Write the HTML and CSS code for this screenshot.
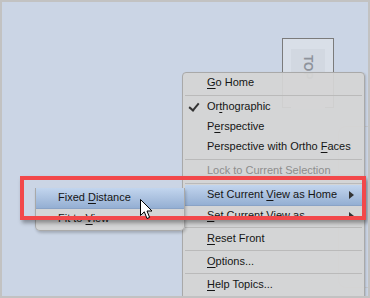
FILE: index.html
```html
<!DOCTYPE html>
<html lang="en">
<head>
    <meta charset="UTF-8">
    <title>View Menu</title>
    <link rel="stylesheet" href="styles.css">
</head>
<body>
    <div class="viewport">
        <div class="cube">
            <div class="cube-face"><span class="cube-label">TOP</span></div>
        </div>
        <div class="ring"></div>

        <div class="menu main-menu">
            <div class="item"><u>G</u>o Home</div>
            <div class="sep"></div>
            <div class="item checked">Or<u>t</u>hographic</div>
            <div class="item">P<u>e</u>rspective</div>
            <div class="item">Perspective with Ortho <u>F</u>aces</div>
            <div class="sep"></div>
            <div class="item disabled">Lock to Current Selection</div>
            <div class="sep"></div>
            <div class="item active has-sub">Set Current <u>V</u>iew as Home</div>
            <div class="item has-sub"><u>S</u>et Current View as</div>
            <div class="sep tight"></div>
            <div class="item"><u>R</u>eset Front</div>
            <div class="sep tight"></div>
            <div class="item"><u>O</u>ptions...</div>
            <div class="sep tight"></div>
            <div class="item"><u>H</u>elp Topics...</div>
        </div>

        <div class="menu sub-menu">
            <div class="item active">Fixed <u>D</u>istance</div>
            <div class="item">Fit to <u>V</u>iew</div>
        </div>

        <div class="callout"></div>

        <svg class="cursor" width="13" height="21" viewBox="0 0 13 21">
            <path d="M0.5 0.5 L0.5 16.5 L4.3 12.8 L7 19.5 L9.6 18.4 L7 12 L12 12 Z" fill="#fff" stroke="#000" stroke-width="1"/>
        </svg>
    </div>
</body>
</html>
```

FILE: styles.css
```css
body {
    margin: 0;
    font-family: "Liberation Sans", Arial, sans-serif;
    font-size: 11px;
    color: #151515;
}

.viewport {
    position: relative;
    width: 370px;
    height: 298px;
    box-sizing: border-box;
    border: 2px solid #c2c2c2;
    background-color: #cbd5e5;
    overflow: hidden;
}

/* view cube behind the menu */
.cube {
    position: absolute;
    left: 280px;
    top: 36px;
    width: 52px;
    height: 70px;
    border: 1px solid #7b7b7b;
    background-color: #d9dfe8;
    display: flex;
    justify-content: center;
    padding-top: 10px;
    box-sizing: border-box;
}
.cube-face {
    width: 34px;
    height: 60px;
    background-color: #d2d8e1;
    display: flex;
    justify-content: center;
}
.cube-label {
    writing-mode: vertical-rl;
    font-weight: bold;
    font-size: 12px;
    color: #8e939b;
    margin-top: 6px;
}
.ring {
    position: absolute;
    left: 336px;
    top: 124px;
    width: 40px;
    height: 160px;
    border: 1px solid #c3c7ce;
    border-radius: 8px;
}

.menu {
    position: absolute;
    box-sizing: border-box;
    background-color: rgba(212, 212, 212, 0.94);
    border: 1px solid #a9a9a9;
}

.main-menu {
    left: 180px;
    top: 70px;
    width: 183px;
    height: 232px;
    border-radius: 4px 4px 0 0;
    padding: 0 2px;
    box-shadow: 1px 1px 2px rgba(0, 0, 0, 0.15);
}

.sub-menu {
    left: 33px;
    top: 186px;
    width: 150px;
    height: 43px;
    border-top: none;
    border-radius: 0 0 5px 5px;
    box-shadow: 1px 2px 3px rgba(0, 0, 0, 0.2);
}

.item {
    position: relative;
    height: 20px;
    line-height: 19px;
    padding-left: 22px;
    white-space: nowrap;
}

.item u {
    text-decoration-thickness: 1px;
    text-underline-offset: 2px;
}

.sep {
    height: 1px;
    margin: 2px 0 1px 0;
    background-color: #bababa;
}
.sep.tight {
    margin: 1px 0 1px 0;
}

.disabled {
    color: #8d8d8d;
}

.active {
    background: linear-gradient(#c2d5ee, #a7bedd 60%, #94afd3);
    border-bottom: 1px solid #8aa3c6;
}

.checked::before {
    content: "";
    position: absolute;
    left: 6px;
    top: 4px;
    width: 4px;
    height: 8px;
    border-right: 2px solid #333;
    border-bottom: 2px solid #333;
    transform: rotate(40deg);
}

.has-sub::after {
    content: "";
    position: absolute;
    right: 8px;
    top: 6px;
    border-left: 5px solid #333;
    border-top: 4px solid transparent;
    border-bottom: 4px solid transparent;
}

.callout {
    position: absolute;
    left: 18px;
    top: 174px;
    width: 346px;
    height: 44px;
    box-sizing: border-box;
    border: 4px solid #f2484a;
    box-shadow: 2px 3px 4px rgba(0, 0, 0, 0.35);
}

.cursor {
    position: absolute;
    left: 138px;
    top: 197px;
}
```
